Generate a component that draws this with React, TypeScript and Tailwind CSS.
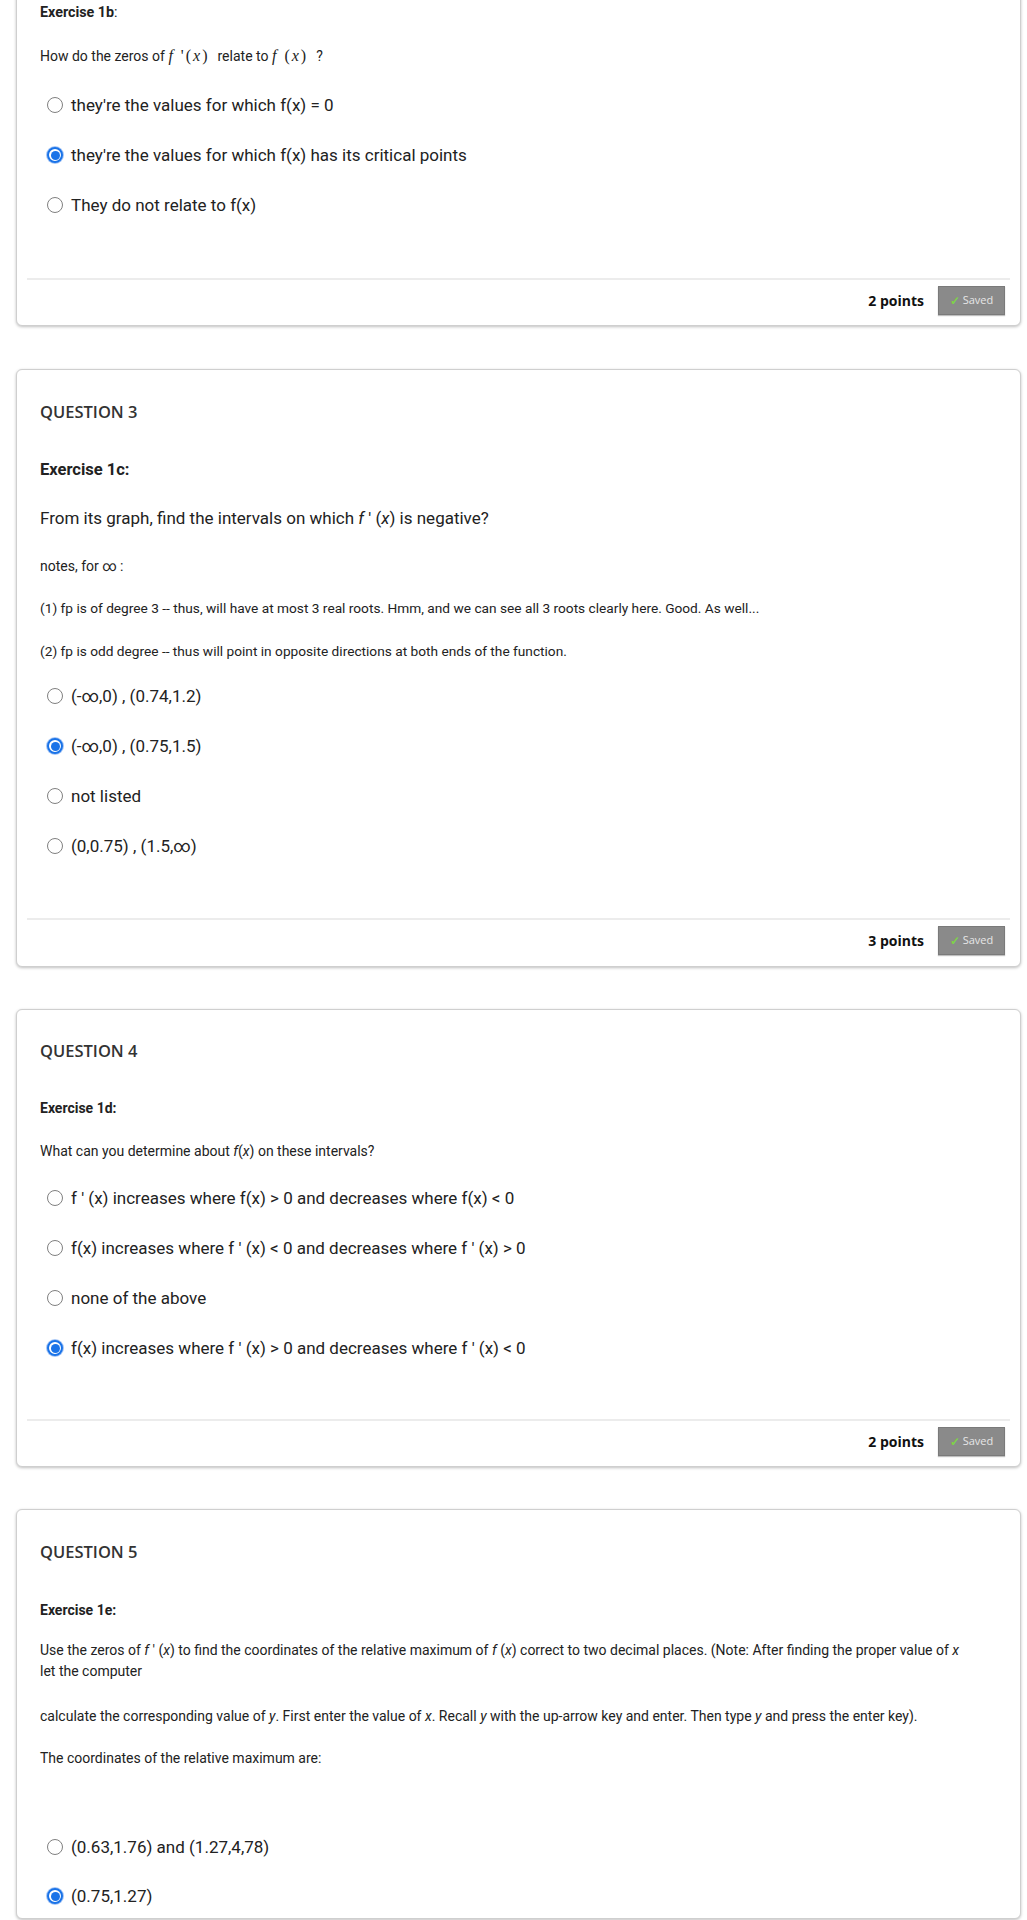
import React from 'react';

type Option = { label: React.ReactNode; checked?: boolean };

const Radio = ({ checked }: { checked?: boolean }) =>
  checked ? (
    <span className="flex h-[16px] w-[16px] shrink-0 items-center justify-center rounded-full border-2 border-[#1a73e8] bg-white shadow-[0_0_0_1px_#a8c7f5]">
      <span className="h-[9px] w-[9px] rounded-full bg-[#1a73e8]" />
    </span>
  ) : (
    <span className="h-[16px] w-[16px] shrink-0 rounded-full border border-[#808080] bg-white" />
  );

const Options = ({ items, gap }: { items: Option[]; gap: string }) => (
  <div className={`flex flex-col ${gap}`}>
    {items.map((o, i) => (
      <label key={i} className="ml-[7px] flex h-[24px] items-center gap-[8px] text-[17px] leading-[24px] text-[#222]">
        <Radio checked={o.checked} />
        <span>{o.label}</span>
      </label>
    ))}
  </div>
);

// footer with divider, points and saved badge
const Footer = ({ points, mt }: { points: number; mt: string }) => (
  <div className={mt}>
    <div className="mx-[10px] h-[2px] bg-[#ececec]" />
    <div className="mt-[6px] flex items-center justify-end gap-[14px] pr-[15px]">
      <span className="font-['Open_Sans',sans-serif] text-[14px] font-bold text-[#111]">{points} points</span>
      <span className="flex h-[29px] w-[67px] items-center justify-center gap-[3px] border border-[#7a7a7a] bg-[#8a8a8a] font-['Open_Sans',sans-serif] text-[11px] text-[#e6e6e6] shadow-[0_1px_1px_rgba(0,0,0,0.25)]">
        <span className="text-[12px] font-bold text-[#7ed348]">✓</span>
        Saved
      </span>
    </div>
  </div>
);

const Card = ({ className, children }: { className: string; children: React.ReactNode }) => (
  <div className={`ml-[16px] mr-[6px] rounded-[6px] border border-[#cfcfcf] bg-white shadow-[0_1px_3px_rgba(0,0,0,0.25)] ${className}`}>
    {children}
  </div>
);

const QTitle = ({ n, pt }: { n: number; pt: string }) => (
  <div className={`${pt} px-[23px] font-['Open_Sans',sans-serif] text-[16.5px] font-semibold leading-[24px] text-[#333]`}>
    QUESTION {n}
  </div>
);

const serif = "font-['Liberation_Serif',serif]";

export default function App() {
  return (
    <div className="min-h-[1920px] overflow-hidden bg-white pb-[10px] font-['Roboto',sans-serif] text-[#222]">
      {/* Question 2 (top cut) */}
      <Card className="-mt-[10px] pt-[11px] pb-[10px]">
        <div className="px-[23px]">
          <div className="text-[14.3px] font-bold leading-[20px]">
            Exercise 1b<span className="font-normal">:</span>
          </div>
          <div className="mt-[24px] text-[14px] leading-[20px]">
            How do the zeros of{' '}
            <span className={`${serif} text-[16px] tracking-[2px]`}>
              <i>f</i> '(<i>x</i>)
            </span>
            <span className="ml-[8px]">relate to</span>{' '}
            <span className={`${serif} text-[16px] tracking-[2px]`}>
              <i>f</i> (<i>x</i>)
            </span>
            <span className="ml-[8px]">?</span>
          </div>
          <div className="mt-[27px]">
            <Options
              gap="gap-[26px]"
              items={[
                { label: 'they\'re the values for which f(x) = 0' },
                { label: 'they\'re the values for which f(x) has its critical points', checked: true },
                { label: 'They do not relate to f(x)' },
              ]}
            />
          </div>
        </div>
        <Footer points={2} mt="mt-[61px]" />
      </Card>

      {/* Question 3 */}
      <Card className="mt-[43px] pb-[11px]">
        <QTitle n={3} pt="pt-[30px]" />
        <div className="px-[23px]">
          <div className="mt-[34px] text-[16.5px] font-bold leading-[24px]">Exercise 1c:</div>
          <div className="mt-[24px] text-[17px] leading-[24px]">
            From its graph, find the intervals on which <i>f</i> ' (<i>x</i>) is negative?
          </div>
          <div className="mt-[26px] text-[14px] leading-[20px]">notes, for ∞ :</div>
          <div className="mt-[22px] text-[13.7px] leading-[20px]">
            (1) fp is of degree 3 -- thus, will have at most 3 real roots. Hmm, and we can see all 3 roots clearly here. Good. As well...
          </div>
          <div className="mt-[23px] text-[13.7px] leading-[20px]">
            (2) fp is odd degree -- thus will point in opposite directions at both ends of the function.
          </div>
          <div className="mt-[23px]">
            <Options
              gap="gap-[26px]"
              items={[
                { label: '(-∞,0) , (0.74,1.2)' },
                { label: '(-∞,0) , (0.75,1.5)', checked: true },
                { label: 'not listed' },
                { label: '(0,0.75) , (1.5,∞)' },
              ]}
            />
          </div>
        </div>
        <Footer points={3} mt="mt-[60px]" />
      </Card>

      {/* Question 4 */}
      <Card className="mt-[42px] pb-[10px]">
        <QTitle n={4} pt="pt-[29px]" />
        <div className="px-[23px]">
          <div className="mt-[35px] text-[14px] font-bold leading-[20px]">Exercise 1d:</div>
          <div className="mt-[23px] text-[14px] leading-[20px]">
            What can you determine about <i>f</i>(<i>x</i>) on these intervals?
          </div>
          <div className="mt-[25px]">
            <Options
              gap="gap-[26px]"
              items={[
                { label: 'f \' (x) increases where f(x) > 0 and decreases where f(x) < 0' },
                { label: 'f(x) increases where f \' (x) < 0 and decreases where f \' (x) > 0' },
                { label: 'none of the above' },
                { label: 'f(x) increases where f \' (x) > 0 and decreases where f \' (x) < 0', checked: true },
              ]}
            />
          </div>
        </div>
        <Footer points={2} mt="mt-[59px]" />
      </Card>

      {/* Question 5 */}
      <Card className="mt-[42px] pb-[10px]">
        <QTitle n={5} pt="pt-[30px]" />
        <div className="px-[23px]">
          <div className="mt-[36px] text-[14px] font-bold leading-[20px]">Exercise 1e:</div>
          <div className="mt-[20px] text-[14px] leading-[21px]">
            Use the zeros of <i>f</i> ' (<i>x</i>) to find the coordinates of the relative maximum of <i>f</i> (<i>x</i>) correct to two decimal places. (Note: After finding the proper value of <i>x</i>
            <br />
            let the computer
          </div>
          <div className="mt-[24px] text-[14px] leading-[20px]">
            calculate the corresponding value of <i>y</i>. First enter the value of <i>x</i>. Recall <i>y</i> with the up-arrow key and enter. Then type <i>y</i> and press the enter key).
          </div>
          <div className="mt-[22px] text-[14px] leading-[20px]">The coordinates of the relative maximum are:</div>
          <div className="mt-[67px]">
            <Options
              gap="gap-[25px]"
              items={[{ label: '(0.63,1.76) and (1.27,4,78)' }, { label: '(0.75,1.27)', checked: true }]}
            />
          </div>
        </div>
      </Card>
    </div>
  );
}
